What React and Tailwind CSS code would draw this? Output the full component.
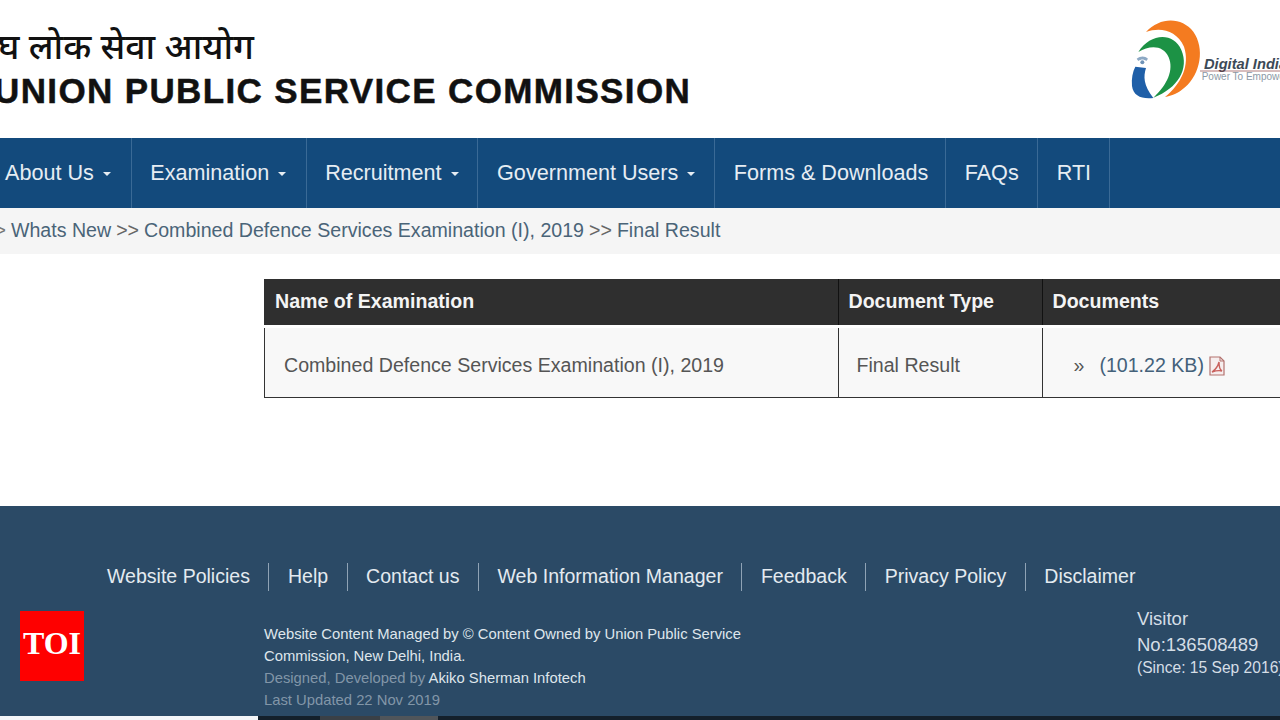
const navItems = [
  { label: 'About Us', caret: true, cls: 'pl-[24px] pr-[20px]' },
  { label: 'Examination', caret: true, cls: 'pl-[18.5px] pr-[19.5px]' },
  { label: 'Recruitment', caret: true, cls: 'px-[18.5px]' },
  { label: 'Government Users', caret: true, cls: 'px-[19px]' },
  { label: 'Forms & Downloads', cls: 'pl-[18.5px] pr-[16.5px]' },
  { label: 'FAQs', cls: 'pl-[19px] pr-[18px]' },
  { label: 'RTI', cls: 'pl-[19px] pr-[18px]' },
]

const footerLinks = ['Website Policies', 'Help', 'Contact us', 'Web Information Manager', 'Feedback', 'Privacy Policy', 'Disclaimer']

function DigitalIndiaLogo() {
  return (
    <svg width="170" height="120" viewBox="0 0 510 360" className="shrink-0">
      <path d="M108 96 C150 50 215 50 250 95 C285 145 272 220 225 262 C205 280 185 288 165 291 C215 250 240 195 222 140 C200 90 150 80 108 96 Z" fill="#f47b20" />
      <path d="M85 156 C120 100 190 95 214 150 C238 205 205 265 130 293 C172 255 192 210 176 172 C160 135 120 135 85 156 Z" fill="#1c9245" />
      <path d="M66 258 C64 235 68 215 76 200 L108 204 C100 230 100 255 130 294 C95 298 70 288 66 258 Z" fill="#1f5fa8" />
      <path d="M80 176 C92 167 104 167 114 176 L109 183 C100 177 94 177 85 183 Z" fill="#8da9c4" />
      <circle cx="97" cy="187" r="6" fill="#6f93b8" />
      <text x="282" y="207" fontFamily="'Liberation Sans', sans-serif" fontSize="44" fontStyle="italic" fontWeight="700" fill="#3c4a57">Digital India</text>
      <line x1="270" y1="213" x2="510" y2="213" stroke="#8a3b3b" strokeWidth="2" />
      <text x="275" y="241" fontFamily="'Liberation Sans', sans-serif" fontSize="30" fill="#8b99a6">Power To Empower</text>
    </svg>
  )
}

function PdfIcon() {
  return (
    <svg width="16" height="20" viewBox="0 0 16 20" className="shrink-0">
      <path d="M1 1 H11 L15 5 V19 H1 Z" fill="#f6eeee" stroke="#b3726f" strokeWidth="1.2" />
      <path d="M11 1 V5 H15" fill="none" stroke="#b3726f" strokeWidth="1" />
      <path d="M3 16 C6 14 9 10 10 6 C10 10 11 14 13 15 C9 14 6 15 3 16 Z" fill="none" stroke="#c9605c" strokeWidth="1.4" />
    </svg>
  )
}

export default function App() {
  return (
    <div className="relative h-[720px] w-[1280px] overflow-hidden bg-white font-['Liberation_Sans',Arial,sans-serif]">
      {/* header */}
      <header className="flex h-[138px] justify-between">
        <div className="-ml-[6px] pt-[29px]">
          <div className="h-[42px] -ml-[21px] whitespace-nowrap font-['Noto_Sans_Devanagari','Lohit_Devanagari','Noto_Sans','Liberation_Sans',sans-serif] text-[35.7px] font-medium leading-[44px] text-[#111]">
            संघ लोक सेवा आयोग
          </div>
          <div className="whitespace-nowrap text-[35px] font-bold leading-[40px] tracking-[1.37px] text-[#111] [-webkit-text-stroke:0.5px_#111]">
            UNION PUBLIC SERVICE COMMISSION
          </div>
        </div>
        <DigitalIndiaLogo />
      </header>

      {/* nav */}
      <nav className="flex h-[70px] bg-[#134a7c] text-[21.6px] text-[#e6edf3]">
        {navItems.map((item) => (
          <div
            key={item.label}
            className={`flex items-center whitespace-nowrap border-r border-[#3a6a96] ${item.cls} ${item.label === 'About Us' ? '-ml-[19px]' : ''}`}
          >
            {item.label}
            {item.caret && <span className="ml-[9px] mt-[2px] h-0 w-0 border-x-[4px] border-t-[4px] border-x-transparent border-t-[#e6edf3]" />}
          </div>
        ))}
      </nav>

      {/* breadcrumb */}
      <div className="flex h-[46px] items-center whitespace-nowrap bg-[#f5f5f5] pl-[10.5px] text-[19.6px] text-[#4a6478]">
        <span className="-ml-[16px] mr-[5px] text-[#777]">&gt;</span>
        <span>Whats New</span>
        <span className="mx-[5px] text-[#666]">&gt;&gt;</span>
        <span>Combined Defence Services Examination (I), 2019</span>
        <span className="mx-[5px] text-[#666]">&gt;&gt;</span>
        <span>Final Result</span>
      </div>

      {/* results table */}
      <main className="h-[252px] pl-[264px] pt-[25px]">
        <div className="grid grid-cols-[574.5px_204px_1fr] text-[19.6px]">
          <div className="flex h-[46px] items-center border-r border-[#111] bg-[#2f2f2f] pl-[11px] font-bold text-[#f4f4f4]">Name of Examination</div>
          <div className="flex h-[46px] items-center border-r border-[#111] bg-[#2f2f2f] pl-[10px] font-bold text-[#f4f4f4]">Document Type</div>
          <div className="flex h-[46px] items-center bg-[#2f2f2f] pl-[10px] font-bold text-[#f4f4f4]">Documents</div>
          <div className="mt-[3px] flex h-[70px] items-center border-b border-l border-r border-[#333] bg-[#f8f8f8] pl-[19px] pt-[6px] text-[#555]">Combined Defence Services Examination (I), 2019</div>
          <div className="mt-[3px] flex h-[70px] items-center border-b border-r border-[#333] bg-[#f8f8f8] pl-[18px] pt-[6px] text-[#555]">Final Result</div>
          <div className="mt-[3px] flex h-[70px] items-center border-b border-[#333] bg-[#f8f8f8] pl-[31px] pt-[6px] text-[#44617a]">
            <span className="mr-[15px] text-[#555]">»</span>
            <span className="mr-[5px]">(101.22 KB)</span>
            <PdfIcon />
          </div>
        </div>
      </main>

      {/* footer */}
      <footer className="h-[210px] bg-[#2b4a66] pt-[57px] text-[#e4eaf0]">
        <div className="flex h-[28px] items-center pl-[107px] text-[19.55px]">
          {footerLinks.map((link, i) => (
            <div
              key={link}
              className={`flex h-[28px] items-center whitespace-nowrap ${i === 0 ? 'pr-[18.5px]' : 'px-[18.5px]'} ${i < footerLinks.length - 1 ? 'border-r border-[#8fa3b5]' : ''}`}
            >
              {link}
            </div>
          ))}
        </div>
        <div className="mt-[15px] flex pl-[264px]">
          <div className="w-[873px] shrink-0 pt-[17px] text-[14.8px] leading-[22px]">
            <div className="w-[500px] text-[#dfe6ec]">Website Content Managed by © Content Owned by Union Public Service Commission, New Delhi, India.</div>
            <div className="text-[#8296a8]">
              Designed, Developed by <span className="text-[#dfe6ec]">Akiko Sherman Infotech</span>
            </div>
            <div className="text-[#8296a8]">Last Updated 22 Nov 2019</div>
          </div>
          <div className="shrink-0 whitespace-nowrap text-[#d5dee6]">
            <div className="text-[18.5px] leading-[26px]">Visitor</div>
            <div className="text-[18.5px] leading-[26px]">No:136508489</div>
            <div className="text-[15.6px] leading-[20px]">(Since: 15 Sep 2016)</div>
          </div>
        </div>
      </footer>

      {/* page behind the footer */}
      <div className="flex h-[4px]">
        <div className="w-[258px] bg-[#f4f6f8]" />
        <div className="w-[62px] bg-[#14202b]" />
        <div className="w-[60px] bg-[#3a4046]" />
        <div className="w-[58px] bg-[#50555a]" />
        <div className="flex-1 bg-[#14202b]" />
      </div>

      {/* watermark badge */}
      <div className="absolute left-[20px] top-[611px] flex h-[70px] w-[64px] items-center justify-center bg-[#fe0000] pb-[6px] font-['Liberation_Serif',serif] text-[32px] font-bold text-white">
        TOI
      </div>
    </div>
  )
}
